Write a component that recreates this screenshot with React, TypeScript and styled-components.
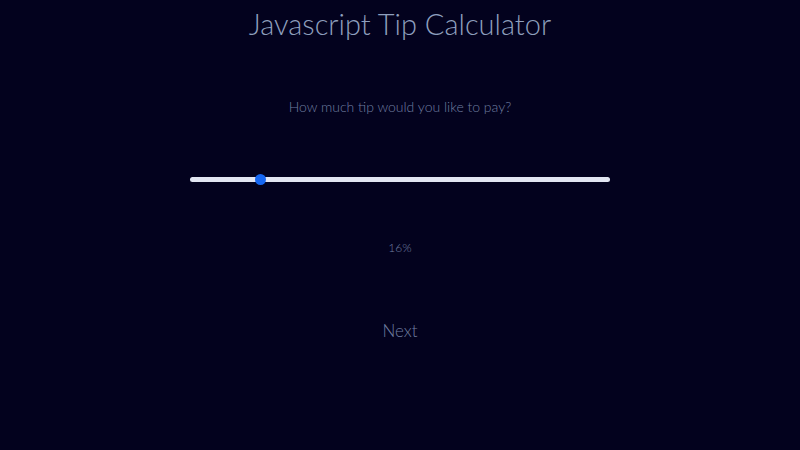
import React, { useState } from "react";
import styled, { createGlobalStyle } from "styled-components";

const GlobalStyle = createGlobalStyle`
    html, body {
        margin: 0;
        padding: 0;
        background: #03021e;
    }
    body {
        font-family: Lato, "Liberation Sans", sans-serif;
    }
`

const Page = styled.main`
    width: 800px;
    height: 450px;
    background: #03021e;
    display: flex;
    flex-direction: column;
    align-items: center;
`

const Title = styled.h1`
    margin: 4px 0 0;
    font-size: 29px;
    font-weight: 300;
    line-height: 40px;
    color: #8e9fbd;
`

const Question = styled.p`
    margin: 53px 0 0;
    font-size: 14px;
    font-weight: 300;
    line-height: 20px;
    color: #6f7ea0;
`

const Range = styled.input`
    -webkit-appearance: none;
    appearance: none;
    margin: 60px 0 0;
    width: 420px;
    height: 5px;
    border-radius: 3px;
    background: #e2e6f2;
    outline: none;

    &::-webkit-slider-thumb {
        -webkit-appearance: none;
        width: 11px;
        height: 11px;
        border-radius: 50%;
        background: #1667f2;
        border: none;
        cursor: pointer;
    }
`

const Percent = styled.span`
    margin-top: 58px;
    font-size: 12px;
    font-weight: 300;
    line-height: 16px;
    color: #6f7ea0;
`

const NextButton = styled.button`
    margin-top: 63px;
    background: none;
    border: none;
    padding: 0;
    font-family: inherit;
    font-size: 17px;
    font-weight: 300;
    line-height: 24px;
    color: #6f7ea0;
    cursor: pointer;
`

export default function App() {
    const [tip, setTip] = useState(16)
    return (
        <>
            <GlobalStyle/>
            <Page>
                <Title>Javascript Tip Calculator</Title>
                <Question>How much tip would you like to pay?</Question>
                <Range type="range" min={0} max={100} value={tip}
                       onChange={e => setTip(Number(e.target.value))}/>
                <Percent>{tip}%</Percent>
                <NextButton>Next</NextButton>
            </Page>
        </>
    )
}
